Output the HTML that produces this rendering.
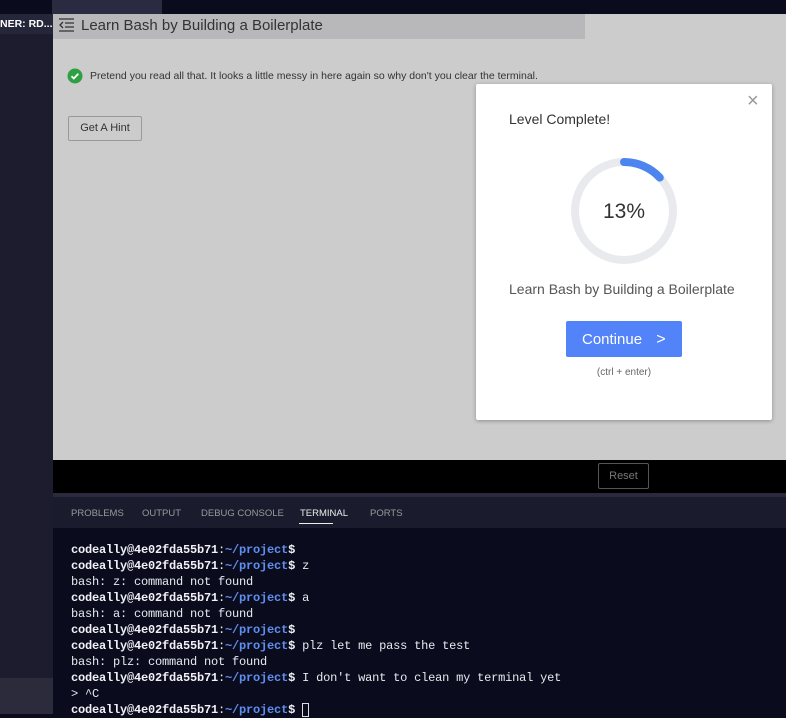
<!DOCTYPE html>
<html><head><style>
*{margin:0;padding:0;box-sizing:border-box}
body{width:786px;height:714px;overflow:hidden;background:#0b0b1e;font-family:"Liberation Sans",sans-serif;position:relative}
.a{position:absolute}
.term div{height:16px;line-height:16px;white-space:pre;font-family:"Liberation Mono",monospace;font-size:12px;color:#e8e8ee;letter-spacing:-0.2px}
.p{font-weight:bold;color:#f0f0f5}
.b{font-weight:bold;color:#5f8ff0}
</style></head><body>
<div class="a" style="left:0;top:0;width:786px;height:14px;background:#0b0b1e"></div>
<div class="a" style="left:52px;top:0;width:110px;height:14px;background:#2a2a40"></div>
<div class="a" style="left:0;top:14px;width:53px;height:700px;background:#1c1c2e"></div>
<div class="a" style="left:0;top:14px;width:53px;height:20px;background:#26263a;color:#fff;font-size:10.5px;font-weight:bold;line-height:20px;white-space:nowrap;overflow:hidden">NER: RD...</div>
<div class="a" style="left:0;top:678px;width:53px;height:36px;background:#2b2b3c"></div>
<div class="a" style="left:53px;top:14px;width:733px;height:446px;background:#cccccc"></div>
<div class="a" style="left:53px;top:14px;width:532px;height:25px;background:#b8b8bb"></div>
<svg class="a" style="left:58px;top:17px" width="18" height="17" viewBox="0 0 18 17"><path d="M1 2h15M7 6h9M7 10h9M1 14h15M5 5L2 8l3 3" stroke="#333" stroke-width="1.3" fill="none"/></svg>
<div class="a" style="left:81px;top:16px;font-size:15px;color:#333;line-height:20px">Learn Bash by Building a Boilerplate</div>
<svg class="a" style="left:67px;top:68px" width="16" height="16"><circle cx="8" cy="8" r="7.5" fill="#2ea043"/><path d="M4.5 8.2l2.3 2.3 4.5-4.7" stroke="#fff" stroke-width="1.8" fill="none"/></svg>
<div class="a" style="left:90px;top:70px;font-size:10.5px;color:#333">Pretend you read all that. It looks a little messy in here again so why don't you clear the terminal.</div>
<div class="a" style="left:68px;top:116px;width:74px;height:25px;border:1px solid #999;border-radius:2px;font-size:11px;color:#333;text-align:center;line-height:23px">Get A Hint</div>
<div class="a" style="left:476px;top:84px;width:296px;height:336px;background:#fff;border-radius:2px;box-shadow:0 1px 4px rgba(0,0,0,.3)"></div>
<div class="a" style="left:747px;top:91px;font-size:20px;color:#999;line-height:20px">×</div>
<div class="a" style="left:509px;top:111px;font-size:14px;color:#333">Level Complete!</div>
<svg class="a" style="left:566px;top:153px" width="116" height="116"><circle cx="58" cy="58" r="49" fill="none" stroke="#e9eaee" stroke-width="8"/><path d="M58 9A49 49 0 0 1 93.8 24.6" fill="none" stroke="#4d85f0" stroke-width="8" stroke-linecap="round"/></svg>
<div class="a" style="left:566px;top:200px;width:116px;text-align:center;font-size:21px;color:#333">13%</div>
<div class="a" style="left:509px;top:281px;font-size:14px;color:#555">Learn Bash by Building a Boilerplate</div>
<div class="a" style="left:566px;top:321px;width:116px;height:36px;background:#5283f8;border-radius:2px;color:#fff;font-size:15px;line-height:37px;padding-left:16px">Continue <span style="margin-left:10px;font-size:16px">&gt;</span></div>
<div class="a" style="left:566px;top:367px;width:116px;text-align:center;font-size:10px;color:#666">(ctrl + enter)</div>
<div class="a" style="left:53px;top:460px;width:733px;height:33px;background:#000"></div>
<div class="a" style="left:598px;top:463px;width:51px;height:26px;border:1px solid #555;border-radius:2px;color:#777;font-size:11px;text-align:center;line-height:24px">Reset</div>
<div class="a" style="left:53px;top:493px;width:733px;height:4px;background:#2a2a3c"></div>
<div class="a" style="left:53px;top:497px;width:733px;height:31px;background:#1b1b2e"></div>
<div class="a" style="left:71px;top:508px;font-size:9.5px;color:#999">PROBLEMS</div>
<div class="a" style="left:142px;top:508px;font-size:9.5px;color:#999">OUTPUT</div>
<div class="a" style="left:201px;top:508px;font-size:9.5px;color:#999">DEBUG CONSOLE</div>
<div class="a" style="left:300px;top:508px;font-size:9.5px;color:#eee">TERMINAL</div>
<div class="a" style="left:299px;top:523px;width:34px;height:1px;background:#eee"></div>
<div class="a" style="left:370px;top:508px;font-size:9.5px;color:#999">PORTS</div>
<div class="a term" style="left:71px;top:542px">
<div><span class="p">codeally@4e02fda55b71</span>:<span class="b">~/project</span><span class="p">$</span></div>
<div><span class="p">codeally@4e02fda55b71</span>:<span class="b">~/project</span><span class="p">$</span> z</div>
<div>bash: z: command not found</div>
<div><span class="p">codeally@4e02fda55b71</span>:<span class="b">~/project</span><span class="p">$</span> a</div>
<div>bash: a: command not found</div>
<div><span class="p">codeally@4e02fda55b71</span>:<span class="b">~/project</span><span class="p">$</span></div>
<div><span class="p">codeally@4e02fda55b71</span>:<span class="b">~/project</span><span class="p">$</span> plz let me pass the test</div>
<div>bash: plz: command not found</div>
<div><span class="p">codeally@4e02fda55b71</span>:<span class="b">~/project</span><span class="p">$</span> I don't want to clean my terminal yet</div>
<div>&gt; ^C</div>
<div><span class="p">codeally@4e02fda55b71</span>:<span class="b">~/project</span><span class="p">$</span> <span style="display:inline-block;width:7px;height:14px;border:1px solid #ddd;vertical-align:middle"></span></div>
</div>
</body></html>
